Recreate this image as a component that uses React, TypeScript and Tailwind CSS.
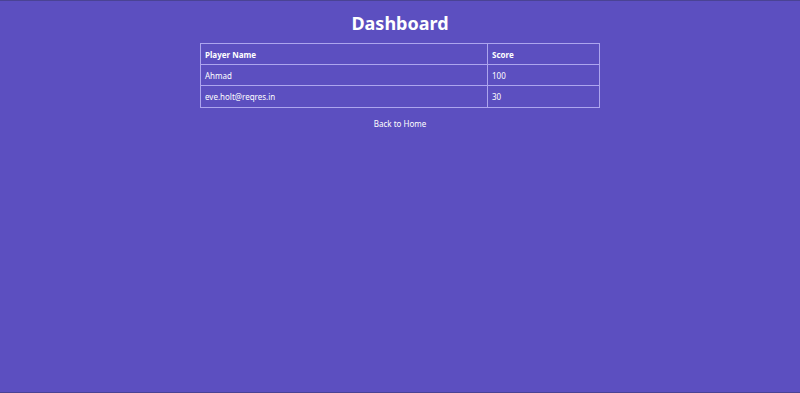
import React from "react";

export default function App() {
  const rows = [
    { name: "Ahmad", score: 100 },
    { name: "eve.holt@reqres.in", score: 30 },
  ];
  return (
    <div
      className="w-[800px] h-[393px] bg-[#5c4fc0] flex flex-col border-t border-b border-[#4a4394] text-white"
      style={{ fontFamily: '"Noto Sans", "Open Sans", sans-serif' }}
    >
      <h1 className="text-[18px] font-bold text-center mt-[10px] leading-[24px]">Dashboard</h1>
      <div className="flex justify-center mt-[8px]">
        <table className="w-[400px] border-collapse text-[8px]">
          <thead>
            <tr className="h-[21px]">
              <th className="border border-[#ada5ee] text-left font-bold px-[4px] pt-[1px]">Player Name</th>
              <th className="border border-[#ada5ee] text-left font-bold px-[4px] pt-[1px] w-[112px]">Score</th>
            </tr>
          </thead>
          <tbody>
            {rows.map((r, i) => (
              <tr key={r.name} className={i === 1 ? "h-[22px]" : "h-[21px]"}>
                <td className="border border-[#ada5ee] px-[4px] pt-[1px]">{r.name}</td>
                <td className="border border-[#ada5ee] px-[4px] pt-[1px]">{r.score}</td>
              </tr>
            ))}
          </tbody>
        </table>
      </div>
      <div className="text-center text-[8px] mt-[10px]">Back to Home</div>
    </div>
  );
}
